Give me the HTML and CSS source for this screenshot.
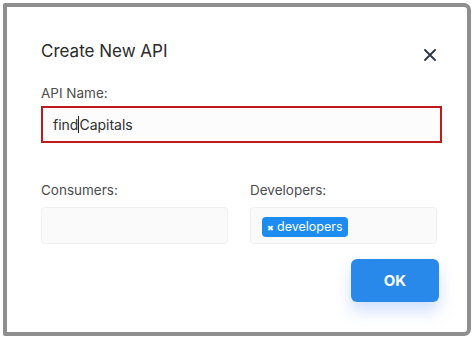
FILE: index.html
```html
<!DOCTYPE html>
<html lang="en">
<head>
<meta charset="utf-8">
<title>Create New API</title>
<link rel="stylesheet" href="styles.css">
</head>
<body>
<div class="frame">
  <div class="dialog">
    <div class="header">
      <h1 class="title">Create New API</h1>
      <button class="close" aria-label="Close">
        <svg width="12" height="12" viewBox="0 0 12 12"><path d="M1 1 L11 11 M11 1 L1 11" stroke="#2b3445" stroke-width="1.8" stroke-linecap="round" fill="none"/></svg>
      </button>
    </div>
    <label class="label">API Name:</label>
    <div class="name-input"><span>find</span><span class="caret"></span><span>Capitals</span></div>
    <div class="row">
      <div class="field">
        <label class="label small-gap">Consumers:</label>
        <div class="box"></div>
      </div>
      <div class="field">
        <label class="label small-gap">Developers:</label>
        <div class="box"><span class="tag"><span class="tag-x">&#x2716;</span>developers</span></div>
      </div>
    </div>
    <div class="actions">
      <button class="ok">OK</button>
    </div>
  </div>
</div>
</body>
</html>
```

FILE: styles.css
```css
* { box-sizing: border-box; }
html, body { margin: 0; padding: 0; background: #ffffff; }
body { font-family: Inter, "Noto Sans", "Liberation Sans", sans-serif; }

.frame {
  margin: 3px 0 0 3px;
  width: 468px;
  height: 333px;
  border: 4px solid #8e8e8e;
  border-radius: 2px 7px 7px 2px;
  background: #ffffff;
}

.dialog {
  padding: 32px 29px 0 34px;
  display: flex;
  flex-direction: column;
}

.header {
  display: flex;
  justify-content: space-between;
  align-items: center;
  height: 24px;
  margin-bottom: 20px;
}

.title {
  margin: 0;
  font-size: 17px;
  line-height: 24px;
  font-weight: 400;
  color: #2a2a2a;
}

.close {
  border: 0;
  background: none;
  padding: 0;
  margin: 8px 2px 0 0;
  width: 12px;
  height: 12px;
  display: flex;
}

.label {
  display: block;
  font-size: 13.5px;
  line-height: 20px;
  color: #4c4c4c;
  margin-bottom: 3px;
}

.small-gap { margin-bottom: 7px; }

.name-input {
  height: 37px;
  margin-right: -4px;
  border: 2px solid #bf1a1f;
  background: #fcfcfc;
  display: flex;
  align-items: center;
  padding-left: 10px;
  font-size: 14px;
  color: #2e2e2e;
}

.caret {
  display: inline-block;
  width: 1px;
  height: 17px;
  background: #222222;
}

.row {
  display: grid;
  grid-template-columns: 187px 187px;
  column-gap: 22px;
  margin-top: 37px;
}

.box {
  height: 37px;
  background: #fafafa;
  border: 1px solid #f0f0f0;
  border-radius: 4px;
  padding: 6px 11px;
}

.tag {
  display: inline-flex;
  align-items: center;
  height: 20px;
  padding: 0 5px 0 5px;
  background: #1d8cf0;
  border-radius: 4px;
  color: #ffffff;
  font-size: 12.5px;
  line-height: 20px;
}

.tag-x {
  font-size: 8px;
  margin-right: 3px;
  position: relative;
  top: 0.5px;
}

.actions {
  display: flex;
  justify-content: flex-end;
  margin-top: 15px;
}

.ok {
  width: 88px;
  height: 43px;
  margin-right: -1px;
  border: 0;
  border-radius: 6px;
  background: #2889ea;
  color: #ffffff;
  font-family: Inter, "Noto Sans", "Liberation Sans", sans-serif;
  font-size: 15px;
  font-weight: 700;
  box-shadow: 0 9px 16px rgba(40, 110, 240, 0.22);
}
```
